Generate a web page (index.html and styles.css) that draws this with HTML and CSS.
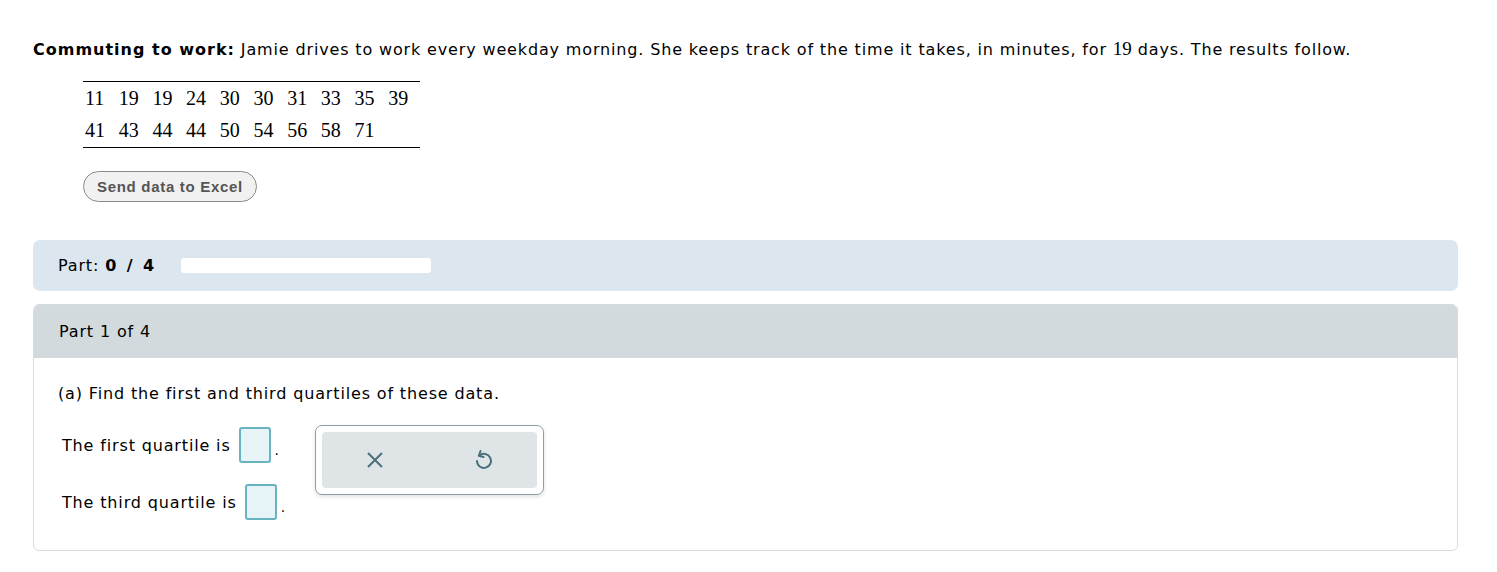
FILE: index.html
```html
<!DOCTYPE html>
<html lang="en">
<head>
    <meta charset="UTF-8">
    <title>Commuting to work</title>
    <link rel="stylesheet" href="styles.css">
</head>
<body>
    <div class="page">
        <p class="intro"><b>Commuting to work:</b> Jamie drives to work every weekday morning. She keeps track of the time it takes, in minutes, for <span class="num">19</span> days. The results follow.</p>

        <table class="data">
            <tr><td>11</td><td>19</td><td>19</td><td>24</td><td>30</td><td>30</td><td>31</td><td>33</td><td>35</td><td>39</td></tr>
            <tr><td>41</td><td>43</td><td>44</td><td>44</td><td>50</td><td>54</td><td>56</td><td>58</td><td>71</td><td></td></tr>
        </table>

        <button class="excel">Send data to Excel</button>

        <div class="progress">
            <span>Part: <b class="count">0 / 4</b></span>
            <div class="bar"></div>
        </div>

        <div class="part">
            <div class="part-head">Part 1 of 4</div>
            <div class="part-body">
                <p class="question">(a) Find the first and third quartiles of these data.</p>
                <div class="answers">
                    <div class="lines">
                        <div class="line first">The first quartile is <span class="box"></span><span class="dot">.</span></div>
                        <div class="line">The third quartile is <span class="box"></span><span class="dot">.</span></div>
                    </div>
                    <div class="tools">
                        <div class="tools-inner">
                            <svg width="18" height="18" viewBox="0 0 18 18"><path d="M2 2 L16 16 M16 2 L2 16" stroke="#4a6f7c" stroke-width="2" fill="none"/></svg>
                            <svg width="20" height="22" viewBox="0 0 20 22"><path d="M6.5 6.5 A7 7 0 1 1 4 12" stroke="#4a6f7c" stroke-width="2" fill="none" stroke-linecap="round"/><path d="M7.5 2 L5.8 6.8 L10.5 8" stroke="#4a6f7c" stroke-width="2" fill="none" stroke-linecap="round" stroke-linejoin="round"/></svg>
                        </div>
                    </div>
                </div>
            </div>
        </div>
    </div>
</body>
</html>
```

FILE: styles.css
```css
body {
    margin: 0;
    font-family: "DejaVu Sans", Verdana, sans-serif;
    letter-spacing: 0.85px;
    color: #000;
    background: #fff;
}
b {
    letter-spacing: 1px;
}
.page {
    padding: 38px 39px 20px 33px;
}
.intro {
    margin: 0;
    font-size: 16px;
    line-height: 22px;
}
.num {
    font-family: "Liberation Serif", serif;
    font-size: 19px;
    letter-spacing: 0;
}
.data {
    margin: 20px 0 0 50px;
    border-collapse: collapse;
    border-top: 1px solid #000;
    border-bottom: 1px solid #000;
    font-family: "Liberation Serif", serif;
    font-size: 20px;
    letter-spacing: 0;
}
.data td {
    padding: 4px 2px 5px 2px;
    width: 29.7px;
}
.data tr:first-child td {
    padding-top: 5px;
}
.excel {
    display: block;
    margin: 23px 0 0 50px;
    padding: 0 13px;
    height: 31px;
    border: 1px solid #8a8a8a;
    border-radius: 16px;
    background: #f1f1f1;
    color: #555;
    font-family: "Liberation Sans", Arial, sans-serif;
    font-weight: bold;
    font-size: 15px;
    letter-spacing: 0.7px;
}
.progress {
    margin-top: 38px;
    height: 51px;
    background: #dbe6ef;
    border-radius: 7px;
    display: flex;
    align-items: center;
    padding-left: 25px;
    font-size: 16px;
}
.count {
    letter-spacing: 2.4px;
}
.bar {
    margin-left: 25px;
    width: 250px;
    height: 15px;
    background: #fff;
    border-radius: 3px;
}
.part {
    margin-top: 13px;
    border: 1px solid #d5dcdf;
    border-radius: 6px;
    overflow: hidden;
}
.part-head {
    background: #d2dadd;
    height: 53px;
    display: flex;
    align-items: center;
    padding-left: 25px;
    font-size: 16px;
}
.part-body {
    padding: 25px 0 30px 24px;
}
.question {
    margin: 0;
    font-size: 16px;
    line-height: 22px;
}
.answers {
    display: flex;
    align-items: flex-start;
    margin-top: 22px;
}
.lines {
    padding-left: 4px;
    font-size: 16px;
}
.line {
    display: flex;
    align-items: center;
    height: 36px;
}
.line.first {
    margin-bottom: 21px;
}
.box {
    display: inline-block;
    width: 28px;
    height: 32px;
    margin-left: 8px;
    border: 2px solid #69b2bf;
    border-radius: 3px;
    background: #e6f4f8;
}
.dot {
    margin-left: 4px;
    margin-top: 10px;
    font-size: 14px;
}
.tools {
    margin-left: 29px;
    margin-top: -2px;
    width: 215px;
    padding: 6px;
    border: 1px solid #8d9ea4;
    border-radius: 7px;
    background: #fff;
    box-shadow: 0 2px 4px rgba(0, 0, 0, 0.12);
}
.tools-inner {
    height: 56px;
    background: #dfe5e7;
    border-radius: 4px;
    display: flex;
    align-items: center;
    gap: 89px;
    padding-left: 44px;
}
```
